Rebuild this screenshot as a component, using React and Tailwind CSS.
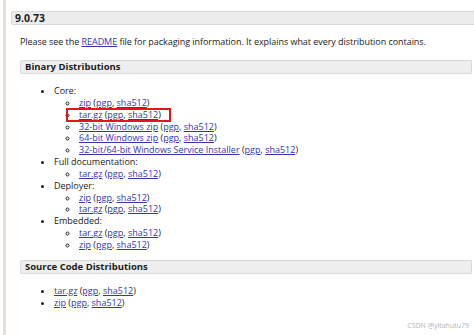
const font = "font-['Open_Sans','Noto_Sans',sans-serif]"

function A({ children }) {
  return <a className="text-[#3535b8] underline decoration-1 underline-offset-1">{children}</a>
}

function Sigs({ children }) {
  return (
    <>
      {children} (<A>pgp</A>, <A>sha512</A>)
    </>
  )
}

function Sub({ items, boxed }) {
  return (
    <ul className="list-[circle] pl-[25px]">
      {items.map((it, i) => (
        <li key={i} className="relative">
          {boxed === i && (
            <span className="pointer-events-none absolute left-[-13px] top-[-1px] h-[14px] w-[105px] border-2 border-[#e3161b]" />
          )}
          <Sigs>
            <A>{it}</A>
          </Sigs>
        </li>
      ))}
    </ul>
  )
}

function Bar({ children }) {
  return (
    <div className="h-[14px] rounded-l-[2px] border border-[#d9d9d9] bg-[#eeeeee] pl-[4px] text-[9.5px] font-bold leading-[12px] text-[#1c1c1c]">
      {children}
    </div>
  )
}

export default function App() {
  return (
    <div className={`relative h-[335px] w-[474px] overflow-hidden bg-white text-[9px] leading-[11.85px] text-[#222] ${font}`}>
      <div className="ml-[3px] h-full border-l-[3px] border-[#e8ded4] pt-[11px] pl-[5px]">
        <div className="-mr-4 h-[14px] rounded-l-[2px] border border-[#d9d9d9] bg-[#ececec] pl-[3px] text-[10.5px] font-bold leading-[12px] text-[#1c1c1c]">
          9.0.73
        </div>

        <div className="pl-[9px] pr-[2px]">
          <p className="mt-[11px] leading-[12px] tracking-[-0.05px]">
            Please see the <A>README</A> file for packaging information. It explains what every distribution contains.
          </p>

          <div className="mt-[12px]">
            <Bar>Binary Distributions</Bar>
          </div>

          <ul className="mt-[11px] list-disc pl-[34px]">
            <li>
              Core:
              <Sub
                boxed={1}
                items={['zip', 'tar.gz', '32-bit Windows zip', '64-bit Windows zip']}
              />
              <ul className="list-[circle] pl-[25px]">
                <li>
                  <A>32-bit/64-bit Windows Service Installer</A> (<A>pgp</A>, <A>sha512</A>)
                </li>
              </ul>
            </li>
            <li>
              Full documentation:
              <Sub items={['tar.gz']} />
            </li>
            <li>
              Deployer:
              <Sub items={['zip', 'tar.gz']} />
            </li>
            <li>
              Embedded:
              <Sub items={['tar.gz', 'zip']} />
            </li>
          </ul>

          <div className="mt-[9px]">
            <Bar>Source Code Distributions</Bar>
          </div>

          <ul className="mt-[11px] list-disc pl-[34px]">
            <li>
              <Sigs>
                <A>tar.gz</A>
              </Sigs>
            </li>
            <li>
              <Sigs>
                <A>zip</A>
              </Sigs>
            </li>
          </ul>
        </div>
      </div>
      <span className="absolute right-[5px] bottom-[5px] text-[7px] leading-[8px] text-[#b5b5b5]">CSDN @yitahutu79</span>
    </div>
  )
}
